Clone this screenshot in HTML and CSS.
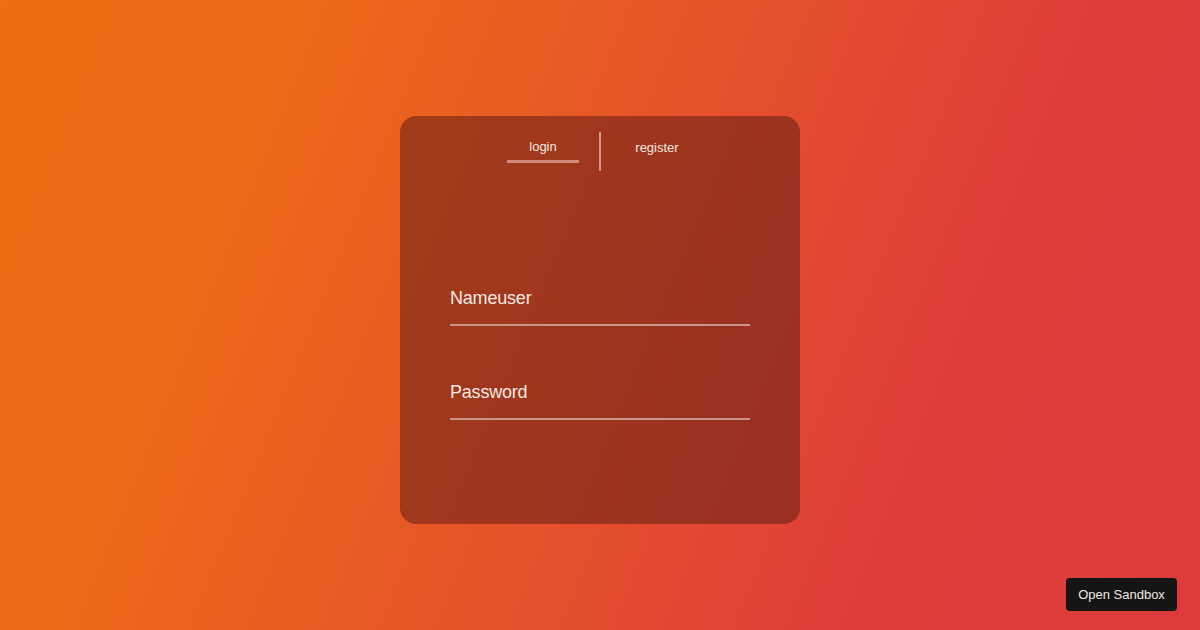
FILE: index.html
```html
<!DOCTYPE html>
<html>
<head>
<meta charset="utf-8">
<link rel="stylesheet" href="styles.css">
</head>
<body>
<div class="page">
  <div class="card">
    <div class="tabs">
      <div class="tab active">login</div>
      <div class="divider"></div>
      <div class="tab">register</div>
    </div>
    <form class="form">
      <div class="field"><span class="label">Nameuser</span></div>
      <div class="field"><span class="label">Password</span></div>
    </form>
  </div>
  <button class="sandbox">Open Sandbox</button>
</div>
</body>
</html>
```
FILE: styles.css
```css
html, body { margin: 0; padding: 0; }
body {
  font-family: "Liberation Sans", Arial, sans-serif;
  width: 1200px;
  height: 630px;
  overflow: hidden;
}
.page {
  width: 1200px;
  height: 630px;
  background: linear-gradient(112deg, #ef6c16 0%, #ee6a17 20%, #e5532a 50%, #dd3e39 75%, #dc3b3b 100%);
  display: flex;
  justify-content: center;
  padding-top: 116px;
  box-sizing: border-box;
  position: relative;
}
.card {
  width: 400px;
  height: 408px;
  border-radius: 16px;
  background: linear-gradient(112deg, #a13c19 0%, #9d3420 60%, #9a2f22 100%);
  box-sizing: border-box;
  padding: 16px 50px 0;
}
.tabs {
  display: flex;
  justify-content: center;
  align-items: stretch;
  height: 39px;
}
.tab {
  width: 72px;
  color: #f6e6de;
  font-size: 13px;
  text-align: center;
  padding-top: 8px;
  box-sizing: border-box;
}
.tab.active {
  padding-top: 7px;
}
.tab.active::after {
  content: "";
  display: block;
  height: 3px;
  margin-top: 6px;
  background: #d08a7a;
}
.divider {
  width: 2px;
  background: #d89a88;
  margin: 0 20px;
}
.form {
  margin-top: 115px;
  display: flex;
  flex-direction: column;
  gap: 54px;
}
.field {
  height: 38px;
  border-bottom: 2px solid #c9948a;
  display: flex;
  align-items: flex-start;
  padding-top: 2px;
  box-sizing: content-box;
  height: 36px;
}
.label {
  color: #f6e8e2;
  font-size: 18px;
  letter-spacing: -0.2px;
}
.sandbox {
  position: absolute;
  right: 23px;
  bottom: 19px;
  width: 111px;
  height: 33px;
  background: #151515;
  color: #f2e6e2;
  border: none;
  border-radius: 4px;
  font-family: "Liberation Sans", Arial, sans-serif;
  font-size: 13px;
  padding: 0;
}
```
